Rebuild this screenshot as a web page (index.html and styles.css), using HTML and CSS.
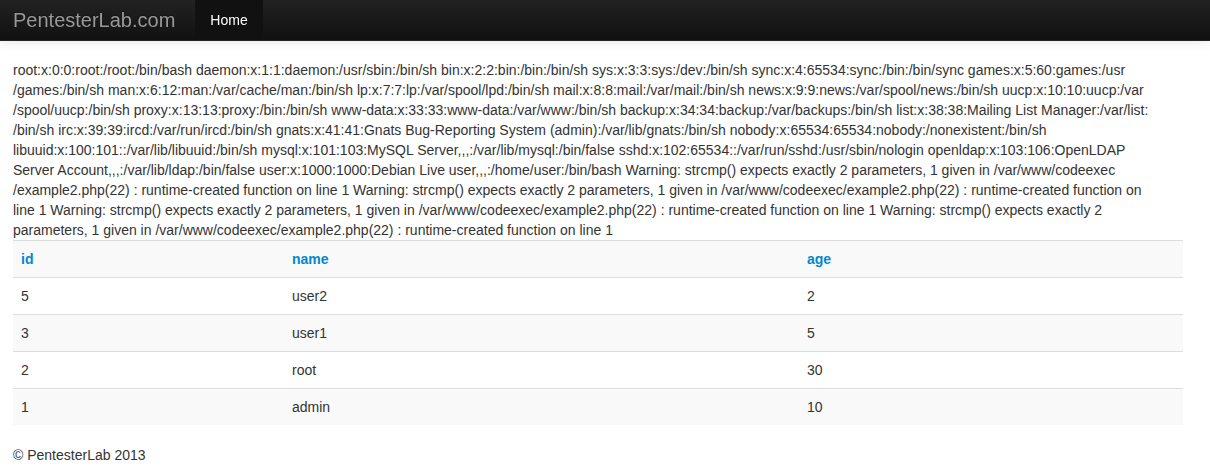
FILE: index.html
```html
<!DOCTYPE html>
<html>
<head>
<meta charset="utf-8">
<title>PentesterLab</title>
<link rel="stylesheet" href="styles.css">
</head>
<body>
<div class="navbar">
  <div class="navbar-inner">
    <div class="container nav-row">
      <a class="brand" href="#">PentesterLab.com</a>
      <ul class="nav">
        <li class="active"><a href="#">Home</a></li>
      </ul>
    </div>
  </div>
</div>
<div class="container main">
  <div class="output">root:x:0:0:root:/root:/bin/bash daemon:x:1:1:daemon:/usr/sbin:/bin/sh bin:x:2:2:bin:/bin:/bin/sh sys:x:3:3:sys:/dev:/bin/sh sync:x:4:65534:sync:/bin:/bin/sync games:x:5:60:games:/usr<br>/games:/bin/sh man:x:6:12:man:/var/cache/man:/bin/sh lp:x:7:7:lp:/var/spool/lpd:/bin/sh mail:x:8:8:mail:/var/mail:/bin/sh news:x:9:9:news:/var/spool/news:/bin/sh uucp:x:10:10:uucp:/var<br>/spool/uucp:/bin/sh proxy:x:13:13:proxy:/bin:/bin/sh www-data:x:33:33:www-data:/var/www:/bin/sh backup:x:34:34:backup:/var/backups:/bin/sh list:x:38:38:Mailing List Manager:/var/list:<br>/bin/sh irc:x:39:39:ircd:/var/run/ircd:/bin/sh gnats:x:41:41:Gnats Bug-Reporting System (admin):/var/lib/gnats:/bin/sh nobody:x:65534:65534:nobody:/nonexistent:/bin/sh<br>libuuid:x:100:101::/var/lib/libuuid:/bin/sh mysql:x:101:103:MySQL Server,,,:/var/lib/mysql:/bin/false sshd:x:102:65534::/var/run/sshd:/usr/sbin/nologin openldap:x:103:106:OpenLDAP<br>Server Account,,,:/var/lib/ldap:/bin/false user:x:1000:1000:Debian Live user,,,:/home/user:/bin/bash Warning: strcmp() expects exactly 2 parameters, 1 given in /var/www/codeexec<br>/example2.php(22) : runtime-created function on line 1 Warning: strcmp() expects exactly 2 parameters, 1 given in /var/www/codeexec/example2.php(22) : runtime-created function on<br>line 1 Warning: strcmp() expects exactly 2 parameters, 1 given in /var/www/codeexec/example2.php(22) : runtime-created function on line 1 Warning: strcmp() expects exactly 2<br>parameters, 1 given in /var/www/codeexec/example2.php(22) : runtime-created function on line 1</div>
  <table class="table table-striped">
    <colgroup>
      <col class="c-id">
      <col class="c-name">
      <col class="c-age">
    </colgroup>
    <tbody>
      <tr><th><a href="#">id</a></th><th><a href="#">name</a></th><th><a href="#">age</a></th></tr>
      <tr><td>5</td><td>user2</td><td>2</td></tr>
      <tr><td>3</td><td>user1</td><td>5</td></tr>
      <tr><td>2</td><td>root</td><td>30</td></tr>
      <tr><td>1</td><td>admin</td><td>10</td></tr>
    </tbody>
  </table>
  <footer class="footer">
    <p>&copy; PentesterLab 2013</p>
  </footer>
</div>
</body>
</html>
```

FILE: styles.css
```css
html, body {
  margin: 0;
}
body {
  padding-top: 60px;
  font-family: "Liberation Sans", Arial, sans-serif;
  font-size: 14px;
  line-height: 20px;
  color: #333333;
  background: #ffffff;
}
a {
  color: #0088cc;
  text-decoration: none;
}
.container {
  width: 1170px;
  margin-left: 13px;
}
.navbar {
  position: fixed;
  top: 0;
  left: 0;
  right: 0;
  z-index: 10;
}
.navbar-inner {
  min-height: 40px;
  background-color: #1b1b1b;
  background-image: linear-gradient(to bottom, #222222, #111111);
  border-bottom: 1px solid #252525;
  box-shadow: 0 1px 10px rgba(0, 0, 0, 0.1);
}
.nav-row {
  display: flex;
  align-items: stretch;
  height: 40px;
}
.brand {
  display: block;
  padding: 10px 20px 10px 0;
  font-size: 20px;
  font-weight: 200;
  line-height: 20px;
  color: #999999;
  text-shadow: 0 -1px 0 rgba(0, 0, 0, 0.25);
}
.nav {
  display: flex;
  margin: 0;
  padding: 0;
  list-style: none;
}
.nav li a {
  display: block;
  padding: 10px 15px;
  line-height: 20px;
  color: #999999;
  text-shadow: 0 -1px 0 rgba(0, 0, 0, 0.25);
}
.nav li.active a {
  background-color: #111111;
  color: #ffffff;
}
.output {
  white-space: nowrap;
}
.table {
  width: 1170px;
  margin-bottom: 20px;
  border-collapse: collapse;
  border-spacing: 0;
}
.c-id { width: 271px; }
.c-name { width: 515px; }
.c-age { width: 384px; }
.table th,
.table td {
  padding: 8px;
  line-height: 20px;
  text-align: left;
  vertical-align: top;
  border-top: 1px solid #dddddd;
}
.table th {
  font-weight: bold;
}
.table-striped tbody tr:nth-child(odd) > th,
.table-striped tbody tr:nth-child(odd) > td {
  background-color: #f9f9f9;
}
.footer p {
  margin: 0;
}
```
